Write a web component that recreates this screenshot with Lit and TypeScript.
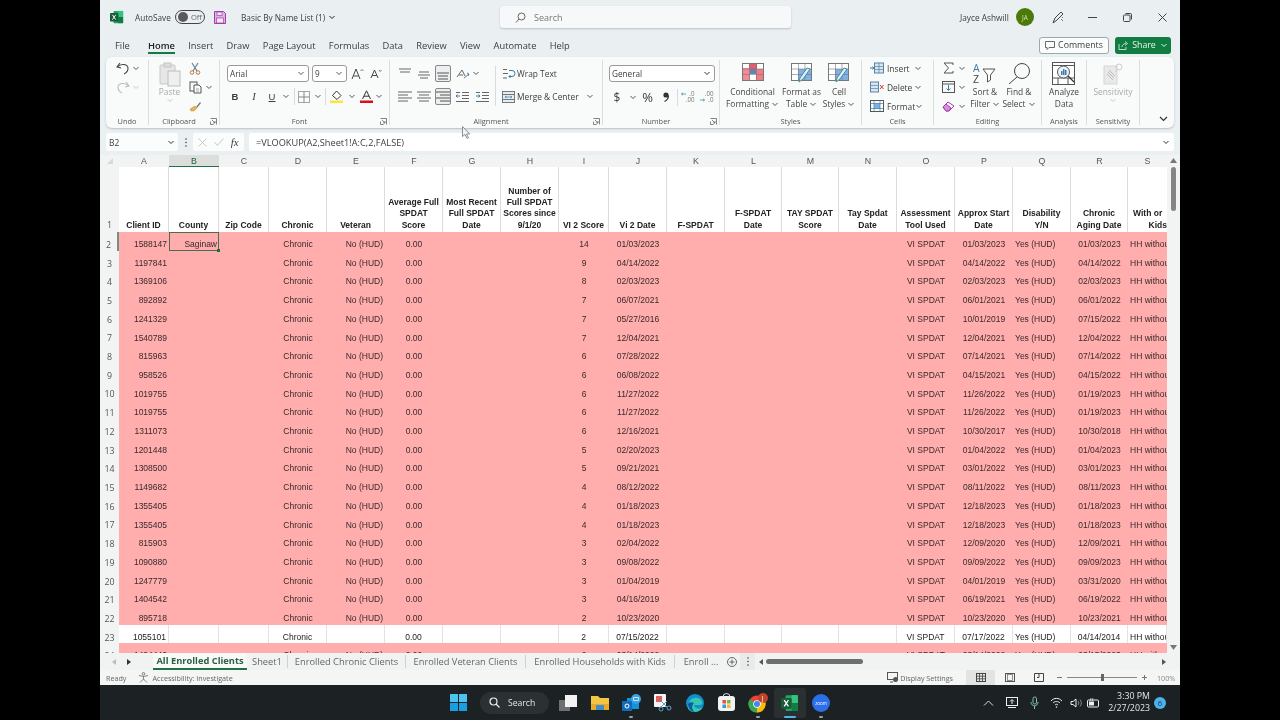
import { LitElement, html, css, svg } from "lit";
import { customElement } from "lit/decorators.js";

const I = (w: number, h: number, b: unknown) =>
  html`<svg width=${w} height=${h} viewBox="0 0 ${w} ${h}" fill="none">${b}</svg>`;

const chev = (c = "#555") => I(8, 5, svg`<path d="M1.500 1l2.500 2.500L6.500 1" stroke=${c} stroke-width="1"/>`);
const lines = (rows: number[][], c = "#666") =>
  I(16, 14, rows.map((r) => svg`<path d="M${r[0]} ${r[2]}H${r[1]}" stroke=${c} stroke-width="1"/>`));
const launcher = () =>
  I(7, 7, svg`<path d="M.5.5h6v6M.5 3.5v3h3M2 2l3 3M5 3v2H3" stroke="#666" stroke-width=".8"/>`);

const undoI = I(16, 14, svg`<path d="M5 2L2 6l4 1" stroke="#444" stroke-width="1.1"/><path d="M2.5 6C6 2 13 3 13 7.500c0 2.500-2 4.500-4 5.500" stroke="#444" stroke-width="1.1"/>`);
const redoI = I(16, 14, svg`<path d="M11 2l3 4-4 1" stroke="#bbb" stroke-width="1.1"/><path d="M13.500 6C10 2 3 3 3 7.500c0 2.500 2 4.500 4 5.500" stroke="#bbb" stroke-width="1.1"/>`);
const pasteI = I(22, 25, svg`<rect x="1" y="3" width="15" height="19" rx="1" fill="#e6e6e6" stroke="#c8c8c8"/><rect x="5" y="1" width="7" height="4" fill="#ddd" stroke="#c4c4c4"/><rect x="9" y="9" width="12" height="15" fill="#efefef" stroke="#bdbdbd"/>`);
const cutI = I(12, 13, svg`<path d="M3 1l5 8M9 1L4 9" stroke="#5b7f95" stroke-width="1.1"/><circle cx="3" cy="10.500" r="1.800" stroke="#c0793a"/><circle cx="9" cy="10.500" r="1.800" stroke="#c0793a"/>`);
const copyI = I(13, 13, svg`<rect x="1" y="1" width="7" height="9" stroke="#555"/><path d="M5 4h5l2 2v6H5z" fill="#f9fafa" stroke="#555"/><path d="M7 8h3M7 10h3" stroke="#888" stroke-width=".7"/>`);
const painterI = I(13, 12, svg`<path d="M7 7l4-5 1 1-4 5z" fill="#777"/><path d="M1 9l5-3 2 2-3 3H2z" fill="#e5b25d" stroke="#c28f3a" stroke-width=".5"/>`);
const growI = I(13, 12, svg`<path d="M1 11L5 1l4 10M2.500 8h5" stroke="#444" stroke-width="1"/><path d="M9.500 3l1.500-1.500L12.500 3" stroke="#444" stroke-width=".7"/>`);
const shrinkI = I(12, 11, svg`<path d="M1 10L4.500 2 8 10M2.300 7.500h4.400" stroke="#444" stroke-width="1"/><path d="M9 2l1.200 1.500L11.500 2" stroke="#444" stroke-width=".7"/>`);
const borderI = I(12, 12, svg`<rect x=".5" y=".5" width="11" height="11" stroke="#9aa"/><path d="M6 .5v11M.5 6h11" stroke="#888"/>`);
const fillI = I(13, 13, svg`<path d="M6.500 1L11 5.500 7 9.500 2.500 5.500z" fill="#fff" stroke="#333"/><rect x="0" y="10.500" width="13" height="2.500" fill="#f5e642"/>`);
const colorI = I(13, 13, svg`<path d="M2.500 9L6.500 .8 10.500 9M4 6.200h5" stroke="#333" stroke-width="1"/><rect x="0" y="10.500" width="13" height="2.500" fill="#d3131e"/>`);
const orientI = I(14, 12, svg`<path d="M1 9L6 2l3 6M3 7l4 0" stroke="#666"/><path d="M8 10l5-4M11 5l2 1-1 2" stroke="#5b7f95"/>`);
const indentL = I(15, 12, svg`<path d="M7 1.500h7M7 4.500h7M7 7.500h7M1 10.500h13M1 1.500h4" stroke="#666"/><path d="M5 5H1m1.500-1.500L1 5l1.500 1.500" stroke="#397ca5"/>`);
const indentR = I(15, 12, svg`<path d="M7 1.500h7M7 4.500h7M7 7.500h7M1 10.500h13M1 1.500h4" stroke="#666"/><path d="M1 5h4M3.500 3.500L5 5 3.500 6.500" stroke="#397ca5"/>`);
const wrapI = I(13, 12, svg`<path d="M1 1.500h4M1 10h4" stroke="#666"/><path d="M7 2.500h3a2 2 0 0 1 0 6H7m1.500-1.500L7 8.500 8.500 10" stroke="#397ca5"/><path d="M1 5.500h5" stroke="#666"/>`);
const mergeI = I(13, 12, svg`<rect x=".5" y=".5" width="12" height="11" fill="#e3eef5" stroke="#777"/><path d="M.5 3.500h12M.5 8.500h12" stroke="#777"/><path d="M3 6h7M3 6l1.500-1M3 6l1.500 1M10 6L8.500 5M10 6L8.500 7" stroke="#397ca5" stroke-width=".7"/>`);
const commaI = I(6, 10, svg`<circle cx="3" cy="3" r="2.600" fill="#333"/><path d="M5.500 3.500C5.500 6.500 3.500 8.500 1.500 9.500" stroke="#333" stroke-width="1.200"/>`);
const incI = I(5, 4, svg`<path d="M5 2H.5M2 .7L.5 2 2 3.300" stroke="#397ca5" stroke-width=".7"/>`);
const decI = I(5, 4, svg`<path d="M0 2h4.500M3 .7L4.500 2 3 3.300" stroke="#397ca5" stroke-width=".7"/>`);
const condI = I(22, 22, svg`<rect x=".5" y="1.500" width="21" height="17" fill="#fff" stroke="#777"/><rect x="7" y="2" width="8" height="5" fill="#e2606a"/><rect x="1" y="6" width="7" height="12" fill="#f18c95"/><rect x="8" y="7" width="7" height="5" fill="#5d86b9"/><rect x="14" y="7" width="7" height="11" fill="#ee7d87"/><path d="M1 7h20M1 12.500h20M7.500 2v16M14.500 2v16" stroke="#8a6d72" stroke-width=".6"/>`);
const tableI = I(22, 22, svg`<rect x=".5" y="1.500" width="20" height="17" fill="#fff" stroke="#777"/><rect x="7" y="7" width="13" height="11" fill="#7fb1e3"/><path d="M1 7h20M1 12.500h20M7.500 2v16M14 2v16" stroke="#777" stroke-width=".6"/><path d="M19 7l-7 10-4 3 1-4 7-10z" fill="#e9f0f5" stroke="#3d8fa6"/>`);
const insertI = I(14, 12, svg`<rect x="4.500" y="1" width="9" height="10" fill="#d8e6f2" stroke="#5a83a5"/><path d="M4.500 4.500h9M4.500 7.500h9M9 1v10" stroke="#5a83a5" stroke-width=".7"/><path d="M0 6h4M2.500 4.500L4 6 2.500 7.500" stroke="#397ca5"/>`);
const deleteI = I(14, 12, svg`<rect x=".5" y="1" width="8" height="10" fill="#d8e6f2" stroke="#5a83a5"/><path d="M.5 4.500h8M.5 7.500h8" stroke="#5a83a5" stroke-width=".7"/><path d="M10 4l3.500 4M13.500 4L10 8" stroke="#d13438"/>`);
const formatI = I(14, 12, svg`<rect x=".5" y=".5" width="13" height="11" fill="#fff" stroke="#555"/><rect x="4" y="3.500" width="6" height="5" fill="#7fb1e3"/><path d="M4 .5v11M10 .5v11M.5 3.500h13M.5 8.500h13" stroke="#397ca5" stroke-width=".7"/>`);
const sumI = I(11, 12, svg`<path d="M10 3V1H1l4.500 5L1 11h9V9" stroke="#555"/>`);
const fillDown = I(13, 12, svg`<rect x=".5" y=".5" width="12" height="11" stroke="#555"/><path d="M.5 3h12" stroke="#555"/><path d="M6.500 4v5M4.500 7.500l2 2 2-2" stroke="#397ca5"/>`);
const clearI = I(13, 11, svg`<path d="M1 6l5-5 6 4-5 5H4z" fill="#fff" stroke="#a33ab0"/><path d="M1 6l3-3 5 4-2.500 3H4z" fill="#d68ee0" stroke="#a33ab0"/>`);
const sortI = I(24, 22, svg`<text x="0" y="10" font-size="10.500" font-family="Open Sans" fill="#397ca5">A</text><text x="0" y="20.500" font-size="10.500" font-family="Open Sans" fill="#444">Z</text><path d="M10 7h12l-4.500 6v5l-3 2v-7z" fill="#fff" stroke="#555"/>`);
const findI = I(24, 24, svg`<circle cx="15" cy="9" r="7.500" stroke="#444"/><path d="M10 15L2 22" stroke="#444"/>`);
const analyzeI = I(24, 24, svg`<rect x=".5" y=".5" width="22" height="22" fill="#fff" stroke="#555"/><path d="M.5 3.500h22M.5 16h22M6 16v7M16 16v7" stroke="#555"/><circle cx="11.500" cy="10" r="6" fill="#eef3f7" stroke="#555"/><rect x="9" y="9" width="1.500" height="4" fill="#397ca5"/><rect x="11" y="7" width="1.500" height="6" fill="#397ca5"/><rect x="13" y="8" width="1.500" height="5" fill="#397ca5"/><path d="M16 14l6 6" stroke="#333" stroke-width="1.200"/>`);
const sensI = I(21, 22, svg`<rect x="1" y="4" width="13" height="18" fill="#e9e9e9" stroke="#d6d6d6"/><path d="M4 12l6 6M5 10l6 6M6 8l6 6" stroke="#bbb"/><circle cx="16" cy="5" r="3" stroke="#ccc"/><path d="M12 10l3-3" stroke="#ccc"/>`);

const xl = (s: number) =>
  I(s, s, svg`<g transform="scale(${s / 16})"><rect x="4" y="1" width="11" height="14" rx="1" fill="#21a366"/><rect x="9.500" y="1" width="5.500" height="7" fill="#33c481"/><rect x="9.500" y="8" width="5.500" height="7" fill="#107c41"/><rect x="0" y="3.500" width="9.500" height="9.500" rx="1" fill="#185c37"/><path d="M2.800 5.500l3.800 5.500M6.600 5.500L2.800 11" stroke="#fff" stroke-width="1.100"/></g>`);

const COLS = [50, 50, 50, 58, 58, 58, 58, 58, 50, 58, 58, 57, 57, 58, 58, 58, 58, 57, 39];
const LETTERS = "ABCDEFGHIJKLMNOPQRS".split("");
const HEAD: string[][] = [["Client ID"], ["County"], ["Zip Code"], ["Chronic"], ["Veteran"], ["Average Full", "SPDAT", "Score"], ["Most Recent", "Full SPDAT", "Date"], ["Number of", "Full SPDAT", "Scores since", "9/1/20"], ["VI 2 Score"], ["Vi 2 Date"], ["F-SPDAT"], ["F-SPDAT", "Date"], ["TAY SPDAT", "Score"], ["Tay Spdat", "Date"], ["Assessment", "Tool Used"], ["Approx Start", "Date"], ["Disability", "Y/N"], ["Chronic", "Aging Date"], ["With or", "Kids"]];

type R = [string, string, string, string, string];
const ROWS: R[] = [
  ["1588147", "14", "01/03/2023", "01/03/2023", "01/03/2023"],
  ["1197841", "9", "04/14/2022", "04/14/2022", "04/14/2022"],
  ["1369106", "8", "02/03/2023", "02/03/2023", "02/03/2023"],
  ["892892", "7", "06/07/2021", "06/01/2021", "06/01/2022"],
  ["1241329", "7", "05/27/2016", "10/01/2019", "07/15/2022"],
  ["1540789", "7", "12/04/2021", "12/04/2021", "12/04/2022"],
  ["815963", "6", "07/28/2022", "07/14/2021", "07/14/2022"],
  ["958526", "6", "06/08/2022", "04/15/2021", "04/15/2022"],
  ["1019755", "6", "11/27/2022", "11/26/2022", "01/19/2023"],
  ["1019755", "6", "11/27/2022", "11/26/2022", "01/19/2023"],
  ["1311073", "6", "12/16/2021", "10/30/2017", "10/30/2018"],
  ["1201448", "5", "02/20/2023", "01/04/2022", "01/04/2023"],
  ["1308500", "5", "09/21/2021", "03/01/2022", "03/01/2023"],
  ["1149682", "4", "08/12/2022", "08/11/2022", "08/11/2023"],
  ["1355405", "4", "01/18/2023", "12/18/2023", "01/18/2023"],
  ["1355405", "4", "01/18/2023", "12/18/2023", "01/18/2023"],
  ["815903", "3", "02/04/2022", "12/09/2020", "12/09/2021"],
  ["1090880", "3", "09/08/2022", "09/09/2022", "09/09/2023"],
  ["1247779", "3", "01/04/2019", "04/01/2019", "03/31/2020"],
  ["1404542", "3", "04/16/2019", "06/19/2021", "06/19/2022"],
  ["895718", "2", "10/23/2020", "10/23/2020", "10/23/2021"],
  ["1055101", "2", "07/15/2022", "07/17/2022", "04/14/2014"],
  ["1404440", "2", "03/14/2022", "03/14/2022", "03/15/2023"],
];

const TABS: [string, number][] = [["All Enrolled Clients", 94], ["Sheet1", 41], ["Enrolled Chronic Clients", 118], ["Enrolled Veteran Clients", 120], ["Enrolled Households with Kids", 149], ["Enroll ...", 52]];

@customElement("app-root")
export class AppRoot extends LitElement {
  static styles = css`
    :host { display: flex; justify-content: center; width: 1280px; height: 720px; background: #000; overflow: hidden; font-family: "Open Sans", "Noto Sans", sans-serif; color: #3c3c3c; }
    .win { position: relative; width: 1080px; height: 720px; display: flex; flex-direction: column; background: #eaeff2; filter: blur(.35px); }
    svg { display: block; flex: none; overflow: visible; }

    .title { height: 34px; flex: none; display: flex; align-items: center; font-size: 8.2px; padding-left: 10px; }
    .title > * { flex: none; }
    .autosave { margin-left: 11px; width: 40px; white-space: nowrap; }
    .toggle { width: 30px; height: 14px; box-sizing: border-box; border: 1px solid #444; border-radius: 8px; display: flex; align-items: center; padding-left: 2px; gap: 3px; font-size: 7.5px; color: #666; }
    .toggle i { width: 10px; height: 10px; border-radius: 50%; background: #5a5a5a; }
    .save { margin-left: 9px; }
    .doc { margin-left: 15px; width: 87px; white-space: nowrap; font-size: 8.3px; }
    .docchev { margin-left: 0; }
    .search { margin-left: 164px; width: 291px; height: 22px; background: #f6f8f9; border-radius: 3px; box-shadow: 0 1px 2px #b9c1c6; display: flex; align-items: center; padding-left: 15px; box-sizing: border-box; gap: 8px; color: #777; font-size: 9px; }
    .user { margin-left: 169px; width: 52px; white-space: nowrap; font-size: 8.3px; }
    .avatar { margin-left: 4px; width: 18px; height: 18px; border-radius: 50%; background: #4b7a08; color: #cfe3a8; font-size: 6.5px; display: flex; align-items: center; justify-content: center; }
    .wc { margin-left: 6px; display: grid; grid-template-columns: 35px 35px 35px 35px; place-items: center; }

    .menu { height: 22px; flex: none; display: flex; align-items: center; padding-left: 15px; font-size: 9.3px; gap: 13.300px; position: relative; }
    .menu span { white-space: nowrap; }
    .menu .home { font-weight: 600; color: #222; position: relative; margin: 0 0 0 5px; }
    .menu .home::after { content: ""; position: absolute; left: 0; right: 0; bottom: -2px; height: 2px; background: #107c41; }
    .btns { margin-left: auto; margin-right: 9px; display: flex; gap: 6px; align-items: center; }
    .comments { width: 70px; height: 17px; box-sizing: border-box; border: 1px solid #9aa; border-radius: 3px; background: #fbfcfc; display: flex; align-items: center; justify-content: center; gap: 3px; font-size: 8.8px; }
    .share { width: 56px; height: 17px; border-radius: 3px; background: #107c41; color: #e8f5ee; display: flex; align-items: center; justify-content: center; gap: 4px; font-size: 8.8px; }

    .ribbon { height: 71px; flex: none; margin: 1px 6px 0; background: #f9fafa; border-radius: 6px; box-shadow: 0 1px 2px #b9c1c6; display: flex; padding-top: 3px; box-sizing: border-box; position: relative; font-size: 8.4px; }
    .g { height: 65px; display: flex; flex-direction: column; border-right: 1px solid #dcdfe0; box-sizing: border-box; position: relative; }
    .gb { height: 55px; flex: none; display: flex; }
    .gl { height: 12px; flex: none; text-align: center; font-size: 7.4px; line-height: 12px; color: #555; }
    .g.hasl .gl { padding-right: 10px; }
    .launch { position: absolute; right: 2px; bottom: 0; }
    .row { display: grid; place-items: center; height: 17px; }
    .stack { display: flex; flex-direction: column; gap: 6px; padding-top: 5px; }
    .stack3 { display: flex; flex-direction: column; gap: 3px; }
    .stack3 .row { height: 16px; }
    .sel { height: 17px; box-sizing: border-box; border: 1px solid #9a9a9a; border-radius: 3px; background: #fff; display: flex; align-items: center; justify-content: space-between; padding: 0 3px 0 2px; font-size: 8.2px; }
    .vd { width: 1px; height: 17px; background: #d8dadb; }
    .active { width: 16px; height: 17px; box-sizing: border-box; border: 1px solid #888; border-radius: 2px; background: #eceeef; display: flex; align-items: center; justify-content: center; }
    .big { display: flex; flex-direction: column; align-items: center; line-height: 12px; white-space: nowrap; color: #444; padding-top: 2px; }
    .ib { height: 24px; flex: none; display: block; }
    .big .cl { display: flex; align-items: center; gap: 2px; }
    .grey { color: #aaa; }

    .g-undo { width: 43px; } .g-clip { width: 71px; } .g-font { width: 170px; } .g-align { width: 213px; } .g-num { width: 117px; } .g-sty { width: 142px; } .g-cells { width: 72px; } .g-edit { width: 108px; } .g-ana { width: 45px; } .g-sens { width: 53px; }
    .undo-r { grid-template-columns: 20px 6px; padding-left: 7px; }
    .paste { width: 36px; padding-left: 5px; box-sizing: border-box; }
    .clip-r { grid-template-columns: 20px 8px; }
    .font-1 { display: flex; padding-left: 7px; align-items: center; height: 17px; }
    .font-1 .size { margin-left: 3px; width: 35px; }
    .font-1 .fname { width: 82px; }
    .grow { width: 20px; height: 17px; display: flex; align-items: center; justify-content: center; }
    .shrink { width: 18px; height: 17px; display: flex; align-items: center; justify-content: center; }
    .font-2 { grid-template-columns: 20px 18px 18px 10px 6px 14px 13px 2px 20px 11px 18px 8px; padding-left: 5px; }
    .b { font-family: "Liberation Sans"; font-weight: 700; font-size: 9.5px; }
    .it { font-family: "Liberation Serif"; font-style: italic; font-size: 10.5px; }
    .un { font-family: "Liberation Sans"; text-decoration: underline; font-size: 9.5px; }
    .al-w { display: flex; }
    .al-r1, .al-r2 { width: 100px; padding-left: 5px; box-sizing: content-box; }
    .al-r1 { grid-template-columns: 19px 19px 19px 22px 4px; justify-content: start; }
    .al-r2 { grid-template-columns: 19px 19px 19px 21px 19px; justify-content: start; }
    .al-div { width: 1px; height: 40px; background: #d8dadb; margin: 6px 6px 0 0; }
    .wrap { display: flex; gap: 2px; align-items: center; height: 17px; white-space: nowrap; }
    .merge i { margin-left: 5px; display: block; }
    .num-1 { padding: 0 5px 0 6px; width: 106px; box-sizing: content-box; }
    .num-2 { grid-template-columns: 16px 15px 15px 22px 1px 19px 19px; padding-left: 6px; justify-content: start; }
    .dollar { font-size: 12px; } .pct { font-size: 13px; }
    .dec { width: 14px; font-size: 6.2px; line-height: 6.500px; color: #777; display: grid; grid-template-columns: 5px 9px; align-items: center; text-align: right; }
    .sty { padding-left: 8px; display: grid; grid-template-columns: 49px 49px 26px; }
    .sty .big { justify-self: center; }
    .cell-r { grid-template-columns: 17px 1fr auto; width: 52px; margin-left: 8px; justify-items: start; }
    .ed { display: grid; grid-template-columns: 28px 34px 34px; padding-left: 6px; }
    .ed-r { grid-template-columns: 16px 12px; }
    .ana { width: 100%; }
    .foot { position: absolute; right: 6px; bottom: 6px; }

    .fbar { height: 18px; flex: none; margin: 5px 6px 0; display: flex; align-items: stretch; }
    .name { width: 72px; background: #fbfcfc; display: flex; align-items: center; justify-content: space-between; padding: 0 3px; box-sizing: border-box; font-size: 8.4px; border-radius: 2px; }
    .dots { width: 15px; display: flex; align-items: center; justify-content: center; }
    .fx { width: 51px; background: #fbfcfc; display: flex; align-items: center; justify-content: space-around; padding: 0 2px; box-sizing: border-box; border-radius: 2px; font-family: "Liberation Serif"; font-style: italic; font-size: 11px; }
    .input { margin-left: 5px; flex: 1; background: #fff; display: flex; align-items: center; justify-content: space-between; padding: 0 4px 0 7px; font-size: 9.2px; border-radius: 2px; }

    .sheet { height: 498px; flex: none; margin-top: 4px; display: flex; background: #fff; overflow: hidden; }
    .table { width: 1067px; flex: none; overflow: hidden; font-family: "Liberation Sans", Arial, sans-serif; font-size: 8.5px; color: #333; }
    .vs { flex: 1; background: #f2f3f3; display: flex; flex-direction: column; align-items: center; justify-content: space-between; padding: 3px 0 3px; position: relative; box-sizing: border-box; }
    .thumb { position: absolute; top: 12px; width: 5px; height: 44px; border-radius: 3px; background: #858585; }
    .r { display: flex; }
    .rh { width: 19px; flex: none; display: flex; align-items: center; justify-content: center; background: #f2f3f3; font-family: "Open Sans"; font-size: 8.8px; color: #555; box-sizing: border-box; }
    .chead { height: 12px; background: #f2f3f3; }
    .chead .c { display: flex; align-items: center; justify-content: center; color: #555; font-size: 8.8px; flex: none; }
    .chead .c.on { background: #dcdedc; border-bottom: 1px solid #1f7246; box-sizing: border-box; color: #1f5f3c; }
    .corner { width: 0; height: 0; border-left: 6px solid transparent; border-bottom: 6px solid #d7d9d9; }
    .r1 { height: 65px; }
    .r1 .rh { align-items: flex-end; padding-bottom: 1px; }
    .r1 .c { flex: none; box-sizing: border-box; border-right: 1px solid #dcdcdc; display: flex; flex-direction: column; justify-content: flex-end; align-items: center; font-weight: 700; line-height: 11.300px; color: #222; padding-bottom: 1px; white-space: nowrap; overflow: hidden; }
    .r1 .c.last { align-items: flex-start; padding-left: 5px; border: 0; }
    .r1 .c.last span:last-child { align-self: flex-end; }
    .d { height: 18.710px; }
    .d .rh { padding-top: 7px; }
    .d .c { flex: none; box-sizing: border-box; height: 18.710px; line-height: 13.700px; white-space: nowrap; overflow: hidden; padding: 6px 2px 0; text-align: center; }
    .pink .c { background: #ffadad; color: #3a2a2a; }
    .white .c { border-right: 1px solid #e3e3e3; color: #222; }
    .c.right { text-align: right; }
    .c.left { text-align: left; }
    .rhl { border-right: 2px solid #7c8c80; }
    .selcell { position: relative; overflow: visible !important; }
    .selcell::after { content: ""; position: absolute; inset: 0; border: 1px solid #4c6b55; }
    .selcell::before { content: ""; position: absolute; right: -1px; bottom: -1px; width: 3px; height: 3px; background: #1f6e43; z-index: 1; }

    .tabs { height: 17px; flex: none; display: flex; align-items: center; background: #f1f2f2; font-size: 9.3px; color: #666; }
    .arrows { width: 53px; flex: none; display: flex; gap: 11px; padding-left: 12px; box-sizing: border-box; }
    .tab { flex: none; text-align: center; white-space: nowrap; box-sizing: border-box; height: 13px; line-height: 13px; border-right: 1px solid #cfd1d1; }
    .tab.on { font-weight: 700; color: #2c5f43; border-right: 0; height: 17px; line-height: 16px; background: #f8f9f9; border-bottom: 2px solid #1f7246; box-sizing: border-box; }
    .tab.last { border: 0; }
    .tdots { width: 15px; height: 17px; margin-left: 3px; display: flex; align-items: center; justify-content: center; background: #e9eaea; }
    .hs { flex: 1; display: flex; align-items: center; padding-left: 4px; padding-right: 14px; gap: 2px; }
    .hthumb { width: 97px; height: 5px; border-radius: 3px; background: #6e6e6e; margin-right: auto; margin-left: 1px; }

    .status { height: 15px; flex: none; background: #f4f5f5; display: flex; align-items: center; padding-left: 6px; font-size: 7.2px; color: #666; }
    .acc { margin-left: 12px; display: flex; align-items: center; gap: 3px; white-space: nowrap; }
    .disp { margin-left: auto; display: flex; align-items: center; gap: 1px; white-space: nowrap; }
    .views { margin-left: 13px; display: grid; grid-template-columns: 29px 29px 29px; height: 15px; place-items: center; }
    .views .on { width: 29px; height: 15px; background: #e2e3e3; display: flex; align-items: center; justify-content: center; }
    .zoom { margin-left: 4px; display: flex; align-items: center; gap: 5px; width: 95px; flex: none; }
    .slider { position: relative; width: 70px; height: 1px; background: #888; }
    .slider i { position: absolute; left: 34px; top: -3px; width: 3px; height: 7px; background: #666; }
    .pc { width: 23px; box-sizing: border-box; text-align: right; padding-right: 5px; margin-left: 5px; color: #888; flex: none; }

    .task { height: 35px; flex: none; background: #1c2124; display: grid; grid-template-columns: 350px 18px 84px 1fr; grid-template-rows: 35px; align-items: center; color: #e6e6e6; position: relative; }
    .win11 { grid-column: 2; grid-row: 1; }
    .tsearch { width: 69px; height: 22px; margin-left: 12px; border-radius: 11px; background: #2b3033; display: flex; align-items: center; gap: 8px; padding-left: 9px; box-sizing: border-box; font-size: 8.6px; grid-column: 3; grid-row: 1; }
    .apps { grid-column: 4; grid-row: 1; display: flex; align-items: center; }
    .app { width: 31.700px; height: 35px; display: flex; align-items: center; justify-content: center; position: relative; flex: none; }
    .app.dot::after { content: ""; position: absolute; bottom: 2px; width: 4px; height: 2px; border-radius: 1px; background: #9aa0a3; }
    .app.act { background: #2a2f32; border-radius: 3px; height: 30px; }
    .app.act::after { content: ""; position: absolute; bottom: 0; left: 10px; right: 10px; height: 2px; border-radius: 1px; background: #4fb6e8; }
    .tray { grid-column: 4; grid-row: 1; justify-self: end; display: flex; align-items: center; height: 35px; font-size: 8.8px; padding-right: 14px; }
    .tis { display: grid; grid-template-columns: 23px 23px 23px 21px 18px 17px; place-items: center; }
    .clock { margin-left: 6px; text-align: right; line-height: 11.500px; white-space: nowrap; }
    .badge { margin-left: 4px; width: 12px; height: 12px; border-radius: 50%; background: #4db2ec; color: #10364f; font-size: 7.5px; display: flex; align-items: center; justify-content: center; }
    .cursor { position: absolute; left: 362px; top: 126px; }
  `;

  private group(cls: string, label: string, body: unknown, launch = false) {
    return html`<div class="g ${cls} ${launch ? "hasl" : ""}"><div class="gb">${body}</div><div class="gl">${label}</div>${launch ? html`<div class="launch">${launcher()}</div>` : ""}</div>`;
  }

  private big(icon: unknown, a: string, b: string, arrow = true) {
    return html`<div class="big"><span class="ib">${icon}</span><span>${a}</span><span class="cl">${b}${arrow ? chev() : ""}</span></div>`;
  }

  private ribbon() {
    const top = lines([[2, 14, 2], [3, 13, 5]]);
    const mid = lines([[3, 13, 5], [2, 14, 8], [4, 12, 11]]);
    const bot = lines([[2, 14, 6], [3, 13, 9], [3, 13, 12]], "#555");
    return html`<div class="ribbon">
      ${this.group("g-undo", "Undo", html`<div class="stack3">
        <div class="row undo-r">${undoI}${chev()}</div>
        <div class="row undo-r">${redoI}${chev("#ccc")}</div></div>`)}
      ${this.group("g-clip", "Clipboard", html`
        <div class="big paste grey"><span class="ib">${pasteI}</span><span>Paste</span><span>${chev("#ccc")}</span></div>
        <div class="stack3">
          <div class="row clip-r">${cutI}<i></i></div>
          <div class="row clip-r">${copyI}${chev()}</div>
          <div class="row clip-r">${painterI}<i></i></div>
        </div>`, true)}
      ${this.group("g-font", "Font", html`<div class="stack">
        <div class="font-1">
          <div class="sel fname">Arial${chev()}</div><div class="sel size">9${chev()}</div>
          <span class="grow">${growI}</span><span class="shrink">${shrinkI}</span>
        </div>
        <div class="row font-2">
          <span class="b">B</span><span class="it">I</span><span class="un">U</span>${chev()}<div class="vd"></div>${borderI}${chev()}<div class="vd"></div>${fillI}${chev()}${colorI}${chev()}
        </div></div>`, true)}
      ${this.group("g-align", "Alignment", html`<div class="al-w">
        <div class="stack">
          <div class="row al-r1">${top}${mid}<div class="active">${bot}</div>${orientI}${chev()}</div>
          <div class="row al-r2">
            ${lines([[1, 15, 2], [1, 11, 5], [1, 15, 8], [1, 11, 11]])}
            ${lines([[1, 15, 2], [3, 13, 5], [1, 15, 8], [3, 13, 11]])}
            <div class="active">${lines([[1, 15, 2], [5, 15, 5], [1, 15, 8], [5, 15, 11]], "#555")}</div>
            ${indentL}${indentR}
          </div>
        </div>
        <div class="al-div"></div>
        <div class="stack">
          <div class="wrap">${wrapI}<span>Wrap Text</span></div>
          <div class="wrap merge">${mergeI}<span>Merge &amp; Center</span><i>${chev()}</i></div>
        </div></div>`, true)}
      ${this.group("g-num", "Number", html`<div class="stack">
        <div class="num-1"><div class="sel">General${chev("#333")}</div></div>
        <div class="row num-2">
          <span class="dollar">$</span>${chev()}<span class="pct">%</span>${commaI}<div class="vd"></div>
          <div class="dec">${incI}<span>.0</span><i></i><span>.00</span></div>
          <div class="dec"><i></i><span>.00</span>${decI}<span>.0</span></div>
        </div></div>`, true)}
      ${this.group("g-sty", "Styles", html`<div class="sty">
        ${this.big(condI, "Conditional", "Formatting")}
        ${this.big(tableI, "Format as", "Table")}
        ${this.big(tableI, "Cell", "Styles")}
      </div>`)}
      ${this.group("g-cells", "Cells", html`<div class="stack3">
        <div class="row cell-r">${insertI}<span>Insert</span>${chev()}</div>
        <div class="row cell-r">${deleteI}<span>Delete</span>${chev()}</div>
        <div class="row cell-r">${formatI}<span>Format</span>${chev()}</div>
      </div>`)}
      ${this.group("g-edit", "Editing", html`<div class="ed">
        <div class="stack3">
          <div class="row ed-r">${sumI}${chev()}</div>
          <div class="row ed-r">${fillDown}${chev()}</div>
          <div class="row ed-r">${clearI}${chev()}</div>
        </div>
        ${this.big(sortI, "Sort &", "Filter")}
        ${this.big(findI, "Find &", "Select")}
      </div>`)}
      ${this.group("g-ana", "Analysis", html`<div class="ana">${this.big(analyzeI, "Analyze", "Data", false)}</div>`)}
      ${this.group("g-sens", "Sensitivity", html`<div class="ana"><div class="big grey"><span class="ib">${sensI}</span><span>Sensitivity</span><span>${chev("#ccc")}</span></div></div>`)}
      <div class="foot">${I(9, 6, svg`<path d="M1 1l3.500 3.500L8 1" stroke="#333" stroke-width="1.200"/>`)}</div>
    </div>`;
  }

  private sheet() {
    return html`<div class="sheet"><div class="table">
      <div class="r chead">
        <div class="rh"><div class="corner"></div></div>
        ${LETTERS.map((l, i) => html`<div class="c ${i === 1 ? "on" : ""}" style="width:${COLS[i]}px">${l}</div>`)}
      </div>
      <div class="r r1"><div class="rh">1</div>
        ${HEAD.map((h, i) => html`<div class="c ${i === 18 ? "last" : ""}" style="width:${COLS[i]}px">${h.map((t) => html`<span>${t}</span>`)}</div>`)}
      </div>
      ${ROWS.map((r, i) => {
        const n = i + 2;
        const white = n === 23;
        const vals: [string, string][] = [
          [r[0], "right"], [n === 2 ? "Saginaw" : "", n === 2 ? "right selcell" : ""], ["", ""], ["Chronic", ""],
          [white ? "" : "No (HUD)", "right"], ["0.00", ""], ["", ""], ["", ""], [r[1], ""], [r[2], ""], ["", ""], ["", ""], ["", ""], ["", ""],
          ["VI SPDAT", ""], [r[3], ""], ["Yes (HUD)", "left"], [r[4], ""], ["HH without Kids", "left"],
        ];
        return html`<div class="r d ${white ? "white" : "pink"}">
          <div class="rh ${n === 2 ? "rhl" : ""}">${n}</div>
          ${vals.map((v, j) => html`<div class="c ${v[1]}" style="width:${COLS[j]}px">${v[0]}</div>`)}
        </div>`;
      })}
    </div>
    <div class="vs">
      ${I(7, 5, svg`<path d="M3.500 0L7 5H0z" fill="#777"/>`)}
      <div class="thumb"></div>
      ${I(7, 5, svg`<path d="M3.500 5L7 0H0z" fill="#777"/>`)}
    </div></div>`;
  }

  private taskbar() {
    return html`<div class="task">
      <div class="win11">${I(17, 17, svg`<rect width="8" height="8" fill="#4cc2f1"/><rect x="9" width="8" height="8" fill="#4cc2f1"/><rect y="9" width="8" height="8" fill="#1b9de2"/><rect x="9" y="9" width="8" height="8" fill="#1b9de2"/>`)}</div>
      <div class="tsearch">${I(11, 11, svg`<circle cx="4.500" cy="4.500" r="3.500" stroke="#eee" stroke-width="1.200"/><path d="M7 7l3.500 3.500" stroke="#eee" stroke-width="1.200"/>`)}<span>Search</span></div>
      <div class="apps">
        <div class="app">${I(18, 16, svg`<rect y="5" width="11" height="11" fill="#6d7072"/><rect x="6" width="12" height="12" fill="#f3f3f3"/>`)}</div>
        <div class="app">${I(18, 15, svg`<path d="M0 1h7l2 2h9v12H0z" fill="#f5c443"/><rect y="9" width="18" height="6" fill="#e9a92b"/><rect x="5" y="10" width="8" height="5" fill="#3a8fd0"/>`)}</div>
        <div class="app dot">${I(19, 18, svg`<rect x="5" y="4" width="12" height="11" fill="#1490df"/><circle cx="14" cy="5" r="5" fill="#3aa0e0"/><path d="M11.500 3.500h5v3h-5z" stroke="#fff" stroke-width=".7"/><rect x="0" y="7" width="10" height="10" rx="1" fill="#0f6cbd"/><circle cx="5" cy="12" r="2" stroke="#fff"/>`)}</div>
        <div class="app">${I(17, 18, svg`<rect x="0" y="0" width="12" height="13" rx="1" fill="#f5f5f5"/><rect x="2" y="2" width="6" height="6" fill="#d9605f"/><path d="M7 7l6 6M13 7l-6 6" stroke="#5aa3c7"/><circle cx="15" cy="14" r="2" stroke="#5aa3c7"/><circle cx="7" cy="15" r="2" stroke="#5aa3c7"/>`)}</div>
        <div class="app">${I(18, 18, svg`<circle cx="9" cy="9" r="9" fill="#0f8fcf"/><path d="M2 11c1-6 7-9 12-6 3 2 3 6 0 6H8c0 3 5 5 9 2-2 4-6 5-9 5-4 0-7-3-6-7z" fill="#37c6b0"/><path d="M2 10c0 4 3 8 7 8-3-2-4-6-1-9-2-1-5-1-6 1z" fill="#0a5ea8"/>`)}</div>
        <div class="app">${I(17, 17, svg`<rect y="2" width="17" height="15" rx="3" fill="#f3f3f3"/><path d="M5 3a3.500 3.500 0 0 1 7 0" stroke="#ddd"/><rect x="4.500" y="6" width="3.500" height="3.500" fill="#e8513a"/><rect x="9" y="6" width="3.500" height="3.500" fill="#7eb73a"/><rect x="4.500" y="10.500" width="3.500" height="3.500" fill="#2c9ee0"/><rect x="9" y="10.500" width="3.500" height="3.500" fill="#f5b82e"/>`)}</div>
        <div class="app dot">${I(20, 20, svg`<circle cx="9" cy="11" r="8.500" fill="#e94335"/><path d="M9 11L1.700 6.500A8.500 8.500 0 0 0 9 19.500z" fill="#34a853"/><path d="M9 11l7.300-4.500A8.500 8.500 0 0 1 9 19.500z" fill="#fbbc05"/><circle cx="9" cy="11" r="3.800" fill="#fff"/><circle cx="9" cy="11" r="3" fill="#4285f4"/><circle cx="15" cy="5" r="5" fill="#c0432a"/><text x="13.500" y="7.500" font-size="6.500" fill="#fff" font-family="Open Sans">J</text>`)}</div>
        <div class="app act">${xl(18)}</div>
        <div class="app dot">${I(18, 18, svg`<circle cx="9" cy="9" r="9" fill="#2d6fe8"/><text x="9" y="11" font-size="4.500" text-anchor="middle" fill="#fff" font-family="Open Sans">zoom</text>`)}</div>
      </div>
      <div class="tray">
        <div class="tis">
          ${I(11, 6, svg`<path d="M1 5.500l4.500-4.500L10 5.500" stroke="#ddd"/>`)}
          ${I(12, 11, svg`<rect x=".5" y=".5" width="11" height="8" stroke="#eee"/><path d="M6 7V3M4 4.500l2-2 2 2M2 10.500h8" stroke="#eee"/>`)}
          ${I(9, 14, svg`<rect x="3" y="1" width="3.500" height="7" rx="1.700" stroke="#7fc4b5"/><path d="M1 6c0 5 7 5 7 0M4.500 10v3" stroke="#7fc4b5"/>`)}
          ${I(13, 11, svg`<path d="M1 4c3-3.500 8-3.500 11 0M3 6c2-2 5-2 7 0M5 8c1-1 2-1 3 0" stroke="#eee"/><circle cx="6.500" cy="10" r=".8" fill="#eee"/>`)}
          ${I(12, 10, svg`<path d="M1 3.500h2L6 1v8L3 6.500H1z" stroke="#eee"/><path d="M8 3c1 1 1 3 0 4M10 1.500c1.800 2 1.800 5 0 7" stroke="#888"/>`)}
          ${I(13, 10, svg`<rect x=".5" y="2" width="11" height="7" rx="1" stroke="#eee"/><rect x="2" y="3.500" width="5" height="4" fill="#eee"/><path d="M4 0l-1 3M6 0l-1 3" stroke="#eee" stroke-width=".7"/>`)}
        </div>
        <div class="clock">3:30 PM<br />2/27/2023</div>
        <div class="badge">6</div>
      </div>
    </div>`;
  }

  render() {
    return html`<div class="win">
      <div class="title">
        ${xl(14)}
        <span class="autosave">AutoSave</span>
        <div class="toggle"><i></i>Off</div>
        <div class="save">${I(12, 13, svg`<path d="M.5.500h9l2 2v10H.5z" fill="#dcb3e3" stroke="#a13ca8"/><rect x="3" y="1" width="5" height="3.500" fill="#f6e9f7" stroke="#a13ca8" stroke-width=".7"/><rect x="2.500" y="7" width="7" height="5" fill="#f6e9f7" stroke="#a13ca8" stroke-width=".7"/>`)}</div>
        <span class="doc">Basic By Name List (1)</span>
        <span class="docchev">${chev("#222")}</span>
        <div class="search">${I(11, 11, svg`<circle cx="6.500" cy="4.500" r="3.500" stroke="#666"/><path d="M4 7L1 10.500" stroke="#666"/>`)}<span>Search</span></div>
        <span class="user">Jayce Ashwill</span>
        <div class="avatar">JA</div>
        <div class="wc">
          ${I(12, 13, svg`<path d="M1 12l2-5 6-6 2 2-6 6z" stroke="#444"/><path d="M9 8l2 2M10 7l1-1" stroke="#777"/>`)}
          ${I(9, 1, svg`<path d="M0 .5h9" stroke="#444"/>`)}
          ${I(9, 9, svg`<rect x=".5" y="2" width="6.500" height="6.500" rx="1" stroke="#444"/><path d="M2.500.5h5a1 1 0 0 1 1 1v5" stroke="#444"/>`)}
          ${I(9, 9, svg`<path d="M.5.500l8 8M8.500.500l-8 8" stroke="#444"/>`)}
        </div>
      </div>
      <div class="menu">
        <span>File</span><span class="home">Home</span><span>Insert</span><span>Draw</span><span>Page Layout</span><span>Formulas</span><span>Data</span><span>Review</span><span>View</span><span>Automate</span><span>Help</span>
        <div class="btns">
          <div class="comments">${I(10, 9, svg`<path d="M.5.500h9v6H4L2 8.500v-2H.5z" stroke="#444" stroke-width=".8"/>`)}Comments</div>
          <div class="share">${I(10, 9, svg`<path d="M1 3v5.500h7V6M4 6c0-2 2-3.500 4-3.500M7 .5L9.500 2.500 7 4.500" stroke="#e8f5ee" stroke-width=".8"/>`)}Share${chev("#e8f5ee")}</div>
        </div>
      </div>
      ${this.ribbon()}
      <div class="fbar">
        <div class="name">B2${chev("#333")}</div>
        <div class="dots">${I(2, 9, svg`<circle cx="1" cy="1" r=".8" fill="#444"/><circle cx="1" cy="4.500" r=".8" fill="#444"/><circle cx="1" cy="8" r=".8" fill="#444"/>`)}</div>
        <div class="fx">
          ${I(9, 9, svg`<path d="M.5.500l8 8M8.500.500l-8 8" stroke="#c8c8c8"/>`)}
          ${I(10, 8, svg`<path d="M.5 4l3 3.500 6-7" stroke="#c8c8c8"/>`)}
          <span>fx</span>
        </div>
        <div class="input"><span>=VLOOKUP(A2,Sheet1!A:C,2,FALSE)</span>${chev("#333")}</div>
      </div>
      ${this.sheet()}
      <div class="tabs">
        <div class="arrows">
          ${I(4, 6, svg`<path d="M4 0v6L0 3z" fill="#bbb"/>`)}
          ${I(4, 6, svg`<path d="M0 0v6l4-3z" fill="#333"/>`)}
        </div>
        ${TABS.map((t, i) => html`<div class="tab ${i === 0 ? "on" : ""} ${i === 5 ? "last" : ""}" style="width:${t[1]}px">${t[0]}</div>`)}
        ${I(10, 10, svg`<circle cx="5" cy="5" r="4.500" stroke="#666"/><path d="M5 2.500v5M2.500 5h5" stroke="#666"/>`)}
        <div class="tdots">${I(2, 9, svg`<circle cx="1" cy="1" r=".8" fill="#444"/><circle cx="1" cy="4.500" r=".8" fill="#444"/><circle cx="1" cy="8" r=".8" fill="#444"/>`)}</div>
        <div class="hs">
          ${I(4, 6, svg`<path d="M4 0v6L0 3z" fill="#555"/>`)}
          <div class="hthumb"></div>
          ${I(4, 6, svg`<path d="M0 0v6l4-3z" fill="#555"/>`)}
        </div>
      </div>
      <div class="status">
        <span>Ready</span>
        <div class="acc">${I(11, 11, svg`<circle cx="5.500" cy="1.800" r="1.300" stroke="#555" stroke-width=".7"/><path d="M1 3.500l4.500 1 4.500-1M5.500 4.500v2.500L2 10.500M5.500 7L9 10.500" stroke="#555" stroke-width=".7"/>`)}<span>Accessibility: Investigate</span></div>
        <div class="disp">${I(12, 11, svg`<rect x=".5" y=".5" width="10" height="7" stroke="#555"/><circle cx="8.500" cy="7.500" r="2.500" fill="#555"/><path d="M3 10h3" stroke="#555"/>`)}<span>Display Settings</span></div>
        <div class="views">
          <div class="on">${I(10, 9, svg`<rect x=".5" y=".5" width="9" height="8" stroke="#444"/><path d="M3.500.500v8M6.500.500v8M.5 3.200h9M.5 5.800h9" stroke="#444" stroke-width=".8"/>`)}</div>
          ${I(10, 9, svg`<rect x=".5" y=".5" width="9" height="8" stroke="#555"/><rect x="2.500" y="1.500" width="5" height="6" stroke="#777" stroke-width=".8"/>`)}
          ${I(10, 9, svg`<path d="M.5.500h9v8h-9zM5 .5v4H3" stroke="#444"/>`)}
        </div>
        <div class="zoom">${I(5, 1, svg`<path d="M0 .5h5" stroke="#777"/>`)}<div class="slider"><i></i></div>${I(5, 5, svg`<path d="M0 2.500h5M2.500 0v5" stroke="#777"/>`)}</div>
        <span class="pc">100%</span>
      </div>
      ${this.taskbar()}
      <div class="cursor">${I(9, 13, svg`<path d="M.5.500v10l2.500-2 2 4 1.500-.8-2-3.700h3.200z" fill="#f2f2f2" stroke="#777" stroke-width=".8"/>`)}</div>
    </div>`;
  }
}
